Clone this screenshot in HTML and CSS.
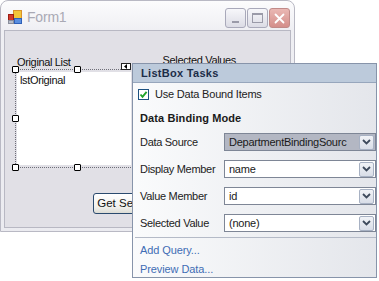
FILE: index.html
```html
<!DOCTYPE html>
<html>
<head>
<meta charset="utf-8">
<link rel="stylesheet" href="styles.css">
</head>
<body>
<div class="stage">
  <div class="window">
    <div class="titlebar">
      <svg class="appicon" width="15" height="15" viewBox="0 0 15 15">
        <rect x="5.5" y="0.5" width="8" height="8" fill="#f2c53a" stroke="#d9932a"/>
        <rect x="6.5" y="8.5" width="7" height="5" fill="#5a8fe0" stroke="#2f60b8"/>
        <rect x="0.5" y="4.5" width="5" height="6" fill="#d23a2a" stroke="#9c1d14"/>
        <rect x="0.5" y="10.5" width="5" height="3" fill="#b8bcc8" stroke="#8a8e9c"/>
      </svg>
      <span class="title">Form1</span>
      <div class="capbtns">
        <div class="capbtn"><span class="g-min"></span></div>
        <div class="capbtn"><span class="g-max"></span></div>
        <div class="capbtn close">
          <svg width="13" height="13" viewBox="0 0 13 13"><path d="M2.5 2.5 L10.5 10.5 M10.5 2.5 L2.5 10.5" stroke="#fff" stroke-width="1.8" stroke-linecap="round"/></svg>
        </div>
      </div>
    </div>
    <div class="client">
      <div class="labels">
        <span class="lbl">Original List</span>
        <span class="lbl sel-values">Selected Values</span>
      </div>
      <div class="listbox">
        <span class="item">lstOriginal</span>
        <div class="selrect"></div>
        <span class="handle h-tl"></span>
        <span class="handle h-tm"></span>
        <span class="handle h-ml"></span>
        <span class="handle h-bl"></span>
        <span class="handle h-bm"></span>
        <span class="smarttag"><svg width="6" height="5" viewBox="0 0 6 5"><path d="M4 0 L1 2.5 L4 5 Z" fill="#000"/></svg></span>
      </div>
      <div class="btnrow">
        <div class="winbtn">Get Selected</div>
      </div>
    </div>
  </div>

  <div class="tasks">
    <div class="tasks-head">ListBox Tasks</div>
    <div class="tasks-body">
      <div class="check-row">
        <span class="checkbox"><svg width="9" height="9" viewBox="0 0 9 9"><path d="M1.5 4.5 L3.5 6.8 L7.6 1.8" fill="none" stroke="#21a32a" stroke-width="1.9"/></svg></span>
        <span>Use Data Bound Items</span>
      </div>
      <div class="section">Data Binding Mode</div>
      <div class="fields">
        <span class="flabel">Data Source</span>
        <div class="combo filled"><span class="cval">DepartmentBindingSourc</span><span class="drop"><svg width="9" height="6" viewBox="0 0 9 6"><path d="M1 1 L4.5 4.5 L8 1" fill="none" stroke="#3e4a5c" stroke-width="1.8"/></svg></span></div>
        <span class="flabel">Display Member</span>
        <div class="combo"><span class="cval">name</span><span class="drop"><svg width="9" height="6" viewBox="0 0 9 6"><path d="M1 1 L4.5 4.5 L8 1" fill="none" stroke="#3e4a5c" stroke-width="1.8"/></svg></span></div>
        <span class="flabel">Value Member</span>
        <div class="combo"><span class="cval">id</span><span class="drop"><svg width="9" height="6" viewBox="0 0 9 6"><path d="M1 1 L4.5 4.5 L8 1" fill="none" stroke="#3e4a5c" stroke-width="1.8"/></svg></span></div>
        <span class="flabel">Selected Value</span>
        <div class="combo"><span class="cval">(none)</span><span class="drop"><svg width="9" height="6" viewBox="0 0 9 6"><path d="M1 1 L4.5 4.5 L8 1" fill="none" stroke="#3e4a5c" stroke-width="1.8"/></svg></span></div>
      </div>
      <div class="sep"></div>
      <div class="links">
        <span class="link">Add Query...</span>
        <span class="link">Preview Data...</span>
      </div>
    </div>
  </div>
</div>
</body>
</html>
```

FILE: styles.css
```css
html, body {
  margin: 0;
  padding: 0;
  background: #ffffff;
}
body {
  font-family: "Liberation Sans", Arial, sans-serif;
  font-size: 11px;
  color: #222;
  overflow: hidden;
}
.stage {
  position: relative;
  width: 379px;
  height: 281px;
}
.window {
  width: 295px;
  height: 232px;
  box-sizing: border-box;
  border: 1px solid #b9b9c4;
  border-radius: 8px 8px 0 0;
  background: linear-gradient(#fcfcfd, #efeff3 29px, #ebebf0);
  padding: 0 3px 3px 3px;
  display: flex;
  flex-direction: column;
}
.titlebar {
  height: 29px;
  display: flex;
  align-items: flex-start;
  padding-left: 4px;
}
.appicon {
  margin-top: 9px;
  flex: none;
}
.title {
  margin-left: 4px;
  margin-top: 7px;
  font-size: 14px;
  line-height: 18px;
  color: #a9a9b4;
  letter-spacing: -0.2px;
}
.capbtns {
  margin-left: auto;
  margin-top: 7px;
  margin-right: 1px;
  display: flex;
  gap: 1px;
}
.capbtn {
  width: 19px;
  height: 18px;
  border: 1px solid #a9a9ba;
  border-radius: 3px;
  background: linear-gradient(#f7f7fa, #dcdce5);
  display: flex;
  align-items: center;
  justify-content: center;
  position: relative;
}
.g-min {
  position: absolute;
  left: 6px;
  bottom: 4px;
  width: 7px;
  height: 2px;
  background: #9a9aa8;
}
.g-max {
  width: 9px;
  height: 7px;
  border: 1px solid #9a9aa8;
  border-top-width: 2px;
}
.capbtn.close {
  border-color: #c08a88;
  background: linear-gradient(#eab8b4, #d48e8a);
}
.client {
  flex: 1;
  border: 1px solid #b8b8c3;
  background: #e1e0e6;
  padding: 25px 0 0 12px;
}
.labels {
  display: flex;
  align-items: flex-start;
  height: 13px;
}
.lbl {
  line-height: 13px;
  letter-spacing: -0.35px;
  color: #111;
}
.sel-values {
  margin-left: 92px;
  margin-top: -2px;
}
.listbox {
  position: relative;
  margin-top: 3px;
  width: 114px;
  height: 93px;
  background: #fff;
}
.item {
  position: absolute;
  left: 3px;
  top: 2px;
  line-height: 13px;
  letter-spacing: -0.35px;
  color: #111;
}
.selrect {
  position: absolute;
  left: -2px;
  top: -3px;
  right: -2px;
  bottom: -3px;
  border: 1px dotted #6e6e78;
}
.handle {
  position: absolute;
  width: 5px;
  height: 5px;
  background: #fff;
  border: 1px solid #000;
  border-radius: 1px;
}
.h-tl { left: -5px; top: -6px; }
.h-tm { left: 57px; top: -6px; }
.h-ml { left: -5px; top: 43px; }
.h-bl { left: -5px; top: 92px; }
.h-bm { left: 57px; top: 92px; }
.smarttag {
  position: absolute;
  right: 0;
  top: -9px;
  width: 6px;
  height: 5px;
  padding: 0 1px;
  background: #fff;
  border: 1px solid #222;
  display: flex;
  align-items: center;
  justify-content: center;
}
.btnrow {
  margin-top: 28px;
  padding-left: 76px;
}
.winbtn {
  width: 73px;
  height: 19px;
  border: 1px solid #2a4a6e;
  border-radius: 3px;
  background: linear-gradient(#ffffff, #f0f0ec 70%, #dcdcd4);
  text-align: center;
  line-height: 19px;
  font-size: 11.5px;
  color: #111;
}
.tasks {
  position: absolute;
  left: 132px;
  top: 63px;
  width: 245px;
  height: 215px;
  box-sizing: border-box;
  border: 1px solid #8794aa;
  background: linear-gradient(to right, #fafbfc, #e4e6eb);
  display: flex;
  flex-direction: column;
}
.tasks-head {
  height: 18px;
  border-bottom: 1px solid #97a6bc;
  background: #bccadb;
  font-weight: bold;
  letter-spacing: 0.3px;
  line-height: 18px;
  padding-left: 8px;
  color: #1c2d48;
}
.tasks-body {
  padding: 6px 0 0 0;
}
.check-row {
  display: flex;
  align-items: center;
  gap: 6px;
  padding-left: 5px;
  height: 11px;
  line-height: 13px;
  letter-spacing: -0.2px;
}
.checkbox {
  width: 9px;
  height: 9px;
  border: 1px solid #1c5180;
  background: #fff;
  display: flex;
}
.section {
  margin-top: 12px;
  padding-left: 7px;
  font-weight: bold;
  line-height: 13px;
  letter-spacing: 0.1px;
  color: #1a1a1a;
}
.fields {
  margin-top: 8px;
  padding-left: 7px;
  display: grid;
  grid-template-columns: 84px 152px;
  grid-auto-rows: 18px;
  row-gap: 9px;
  align-items: center;
}
.flabel {
  line-height: 13px;
  letter-spacing: -0.3px;
  color: #222;
}
.combo {
  height: 18px;
  box-sizing: border-box;
  border: 1px solid #7e8696;
  background: #fff;
  display: flex;
  align-items: center;
  justify-content: space-between;
  padding: 0 1px 0 4px;
}
.combo.filled {
  background: #b3b7c3;
}
.cval {
  line-height: 13px;
  letter-spacing: -0.25px;
  color: #1a1a1a;
}
.drop {
  width: 13px;
  height: 13px;
  border: 1px solid #a7b1c3;
  border-radius: 2px;
  background: linear-gradient(#f1f3f7, #d8dde7);
  display: flex;
  align-items: center;
  justify-content: center;
}
.sep {
  margin: 5px 0 0 2px;
  height: 1px;
  background: #b4bac7;
}
.links {
  padding: 6px 0 0 7px;
  display: flex;
  flex-direction: column;
  gap: 6px;
}
.link {
  line-height: 13px;
  color: #3f6db5;
  letter-spacing: -0.1px;
}
```
